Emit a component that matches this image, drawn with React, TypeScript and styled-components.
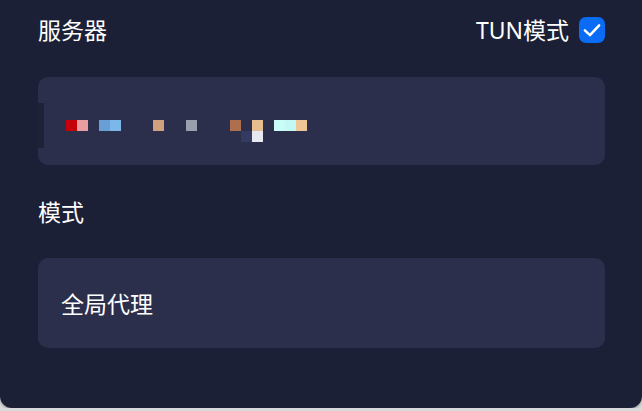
import React from 'react';
import styled, {createGlobalStyle} from 'styled-components';

const GlobalStyle = createGlobalStyle`
    html, body {
        margin: 0;
        padding: 0;
        background: #d9d9dc;
    }
    body {
        font-family: 'Noto Sans', 'Noto Sans CJK SC', sans-serif;
    }
`

// mosaic cells that hide the server address: [x, y, colour]
const cells: [number, number, string][] = [
    [0, 0, '#c40008'], [11, 0, '#e89da0'],
    [33, 0, '#6a9fd6'], [44, 0, '#7ab8ea'],
    [87, 0, '#d3a07e'],
    [120, 0, '#9a9fae'],
    [164, 0, '#ad6f4d'],
    [175, 11, '#3a4470'],
    [186, 0, '#e6bf90'], [186, 11, '#e8e8ef'],
    [208, 0, '#c9fdf8'], [219, 0, '#c4f8f4'], [230, 0, '#efc595'],
];

const Mosaic = () => (
    <svg width="241" height="22" viewBox="0 0 241 22">
        {cells.map(([x, y, c], i) => (
            <rect key={i} x={x} y={y} width="11" height="11" fill={c}
                  opacity={c === '#3a4470' ? 0.6 : 1}/>
        ))}
    </svg>
);

const CheckIcon = () => (
    <svg width="22" height="22" viewBox="0 0 16 16" fill="none">
        <path d="M2.8 8.3 L6.5 11.7 L13.2 4.6" stroke="#fff" strokeWidth="1.8"
              strokeLinecap="round" strokeLinejoin="round"/>
    </svg>
);

export default function App() {
    return (
        <>
            <GlobalStyle/>
            <Panel>
                <HeaderRow>
                    <Label>服务器</Label>
                    <Toggle>
                        <Label>TUN模式</Label>
                        <CheckBox><CheckIcon/></CheckBox>
                    </Toggle>
                </HeaderRow>
                <Field $height={88}>
                    <EdgeShade/>
                    <Mosaic/>
                </Field>
                <SectionLabel>模式</SectionLabel>
                <Field $height={90}>
                    <Value>全局代理</Value>
                </Field>
            </Panel>
        </>
    );
}

const Panel = styled.div`
    height: 408px;
    box-sizing: border-box;
    background: #1c2036;
    border-radius: 0 0 12px 12px;
    padding: 16px 37px 0 38px;
    display: flex;
    flex-direction: column;
    box-shadow: 0 1px 3px rgba(0, 0, 0, 0.35);
`
const HeaderRow = styled.div`
    display: flex;
    justify-content: space-between;
    align-items: center;
    height: 28px;
    margin-bottom: 33px;
`
const Toggle = styled.div`
    display: flex;
    align-items: center;
    gap: 10px;
`
const Label = styled.span`
    color: #ffffff;
    font-size: 23px;
    line-height: 28px;
`
const CheckBox = styled.span`
    width: 26px;
    height: 26px;
    border-radius: 7px;
    background: #0a6cf5;
    display: flex;
    align-items: center;
    justify-content: center;
`
const Field = styled.div<{ $height: number }>`
    position: relative;
    height: ${p => p.$height}px;
    background: #2b2f4c;
    border-radius: 10px;
    display: flex;
    align-items: center;
    padding: 0 23px 0 28px;
    overflow: hidden;

    svg {
        margin-top: 20px;
    }
`
const EdgeShade = styled.span`
    position: absolute;
    left: 0;
    top: 26px;
    width: 6px;
    height: 45px;
    background: #1e2238;
`
const SectionLabel = styled(Label)`
    margin-top: 33px;
    margin-bottom: 32px;
`
const Value = styled.span`
    color: #ffffff;
    font-size: 23px;
    margin-left: -5px;
`
